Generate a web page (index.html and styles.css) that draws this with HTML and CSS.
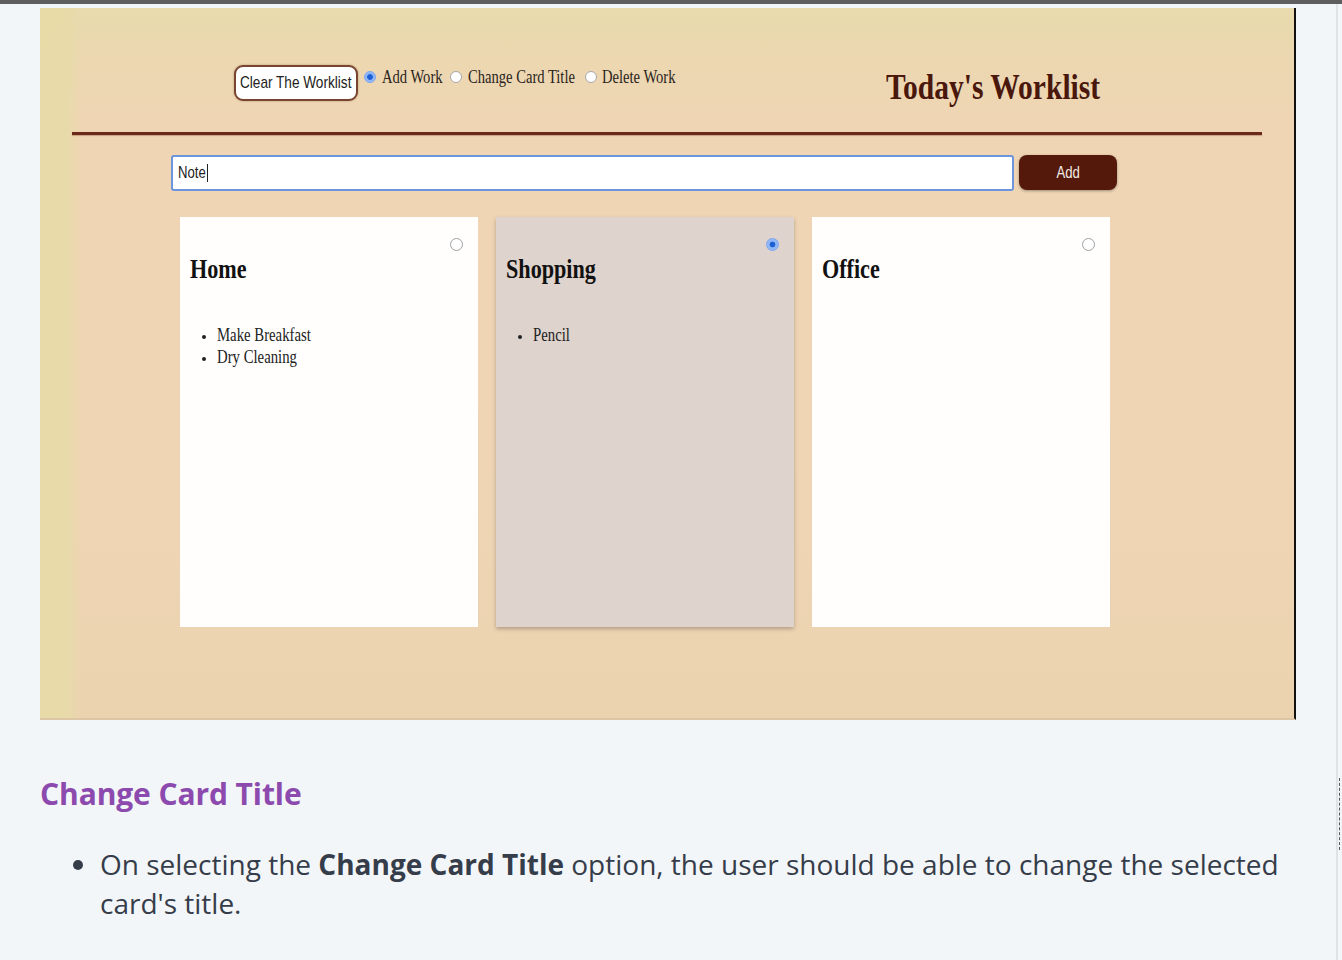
FILE: index.html
```html
<!DOCTYPE html>
<html lang="en">
<head>
<meta charset="utf-8">
<title>Change Card Title</title>
<link rel="stylesheet" href="styles.css">
</head>
<body>
<div class="topbar"></div>
<div class="page">
  <main class="content">
    <div class="shot">
      <div class="toolbar">
        <div class="controls">
          <button class="clear-btn"><span class="sq">Clear The Worklist</span></button>
          <label class="opt opt-add"><span class="radio checked"></span><span class="sq">Add Work</span></label>
          <label class="opt opt-change"><span class="radio"></span><span class="sq">Change Card Title</span></label>
          <label class="opt opt-delete"><span class="radio"></span><span class="sq">Delete Work</span></label>
        </div>
        <h1 class="app-title"><span class="sq-r">Today's Worklist</span></h1>
      </div>
      <div class="rule"></div>
      <div class="entry">
        <div class="note-input"><span class="sq note-text">Note</span><span class="caret"></span></div>
        <button class="add-btn"><span class="sq-c">Add</span></button>
      </div>
      <div class="cards">
        <section class="card">
          <span class="radio card-radio"></span>
          <h2 class="card-title"><span class="sq">Home</span></h2>
          <ul class="items">
            <li><span class="sq">Make Breakfast</span></li>
            <li><span class="sq">Dry Cleaning</span></li>
          </ul>
        </section>
        <section class="card selected">
          <span class="radio card-radio checked"></span>
          <h2 class="card-title"><span class="sq">Shopping</span></h2>
          <ul class="items">
            <li><span class="sq">Pencil</span></li>
          </ul>
        </section>
        <section class="card">
          <span class="radio card-radio"></span>
          <h2 class="card-title"><span class="sq">Office</span></h2>
        </section>
      </div>
    </div>
    <h3 class="section-title">Change Card Title</h3>
    <ul class="desc">
      <li>On selecting the <strong>Change Card Title</strong> option, the user should be able to change the selected card's title.</li>
    </ul>
  </main>
  <div class="scroll-track"><span class="dots"></span></div>
</div>
</body>
</html>
```

FILE: styles.css
```css
html, body {
  margin: 0;
  padding: 0;
}
body {
  background: #f3f6f8;
  font-family: "Open Sans", "Liberation Sans", sans-serif;
  color: #363d4a;
}
.topbar {
  height: 4px;
  background: #5d5e60;
}
.page {
  display: flex;
  height: 956px;
}
.content {
  width: 1296px;
  padding: 4px 0 0 40px;
  box-sizing: border-box;
}
.scroll-track {
  width: 2px;
  margin-left: 40px;
  background: #dde3e6;
  position: relative;
}
.dots {
  position: absolute;
  left: 3px;
  top: 774px;
  height: 72px;
  border-left: 1px dashed #555;
}

/* embedded screenshot */
.shot {
  width: 1256px;
  height: 712px;
  box-sizing: border-box;
  border-right: 2px solid #111;
  border-bottom: 2px solid #dcc6a6;
  background:
    linear-gradient(90deg, rgba(231,219,168,0.95) 0, rgba(231,219,168,0.9) 28px, rgba(231,219,168,0) 40px),
    linear-gradient(180deg, #e8dbad 0, #ebd8b0 40px, #efd5b4 110px, #efd5b4 400px, #ecd3b0 712px);
  font-family: "Liberation Serif", serif;
  color: #222;
}
.sq, .sq-r, .sq-c {
  display: inline-block;
  transform: scaleX(0.82);
  transform-origin: left center;
  white-space: nowrap;
}
.sq-r { transform-origin: right center; }
.sq-c { transform-origin: center center; }

.toolbar {
  height: 124px;
  box-sizing: border-box;
  padding: 57px 194px 0 194px;
  display: flex;
  align-items: flex-start;
}
.controls {
  display: flex;
  align-items: flex-start;
}
.clear-btn {
  width: 124px;
  height: 36px;
  box-sizing: border-box;
  border: 2px solid #7a4530;
  border-radius: 9px;
  background: #fff;
  font-family: "Liberation Sans", sans-serif;
  font-size: 16.6px;
  color: #222;
  padding: 0 0 0 4px;
  text-align: left;
  line-height: 32px;
  box-shadow: 0 0 2px rgba(90,40,20,0.4);
  overflow: hidden;
}
.opt {
  display: flex;
  align-items: center;
  font-size: 17.8px;
  color: #2a2420;
  height: 24px;
  margin-left: 6px;
}
.opt .radio { margin-right: 6px; }
.opt-add .sq { width: 63px; }
.opt-change { margin-left: 5px; }
.opt-change .sq { width: 111px; }
.opt-delete { margin-left: 6px; }
.opt-delete .radio { margin-right: 5px; }
.radio {
  width: 12px;
  height: 12px;
  box-sizing: border-box;
  border-radius: 50%;
  border: 1px solid #a8a8a8;
  background: #fff;
  flex: none;
  display: inline-block;
}
.radio.checked {
  border: 1px solid #7aa6ee;
  background: radial-gradient(circle, #1f5fd6 0, #1f5fd6 2.5px, #8cb4f4 3.2px, #9fc0f6 100%);
}
.app-title {
  margin: 4px 0 0 auto;
  font-size: 36px;
  line-height: 36px;
  font-weight: bold;
  color: #4a170c;
}
.rule {
  margin-left: 32px;
  width: 1190px;
  height: 3px;
  background: #6c2a1b;
  box-shadow: 0 1px 1px rgba(110,40,20,0.3);
}
.entry {
  display: flex;
  margin: 20px 0 0 131px;
  height: 36px;
}
.note-input {
  width: 843px;
  height: 36px;
  box-sizing: border-box;
  border: 2px solid #6d95db;
  border-radius: 3px;
  background: #fff;
  font-family: "Liberation Sans", sans-serif;
  font-size: 16px;
  color: #222;
  padding-left: 5px;
  display: flex;
  align-items: center;
}
.note-text { width: 29px; }
.caret {
  width: 1px;
  height: 18px;
  background: #222;
}
.add-btn {
  margin-left: 5px;
  width: 98px;
  height: 35px;
  border: none;
  border-radius: 8px;
  background: #55190b;
  color: #f4ece6;
  font-family: "Liberation Sans", sans-serif;
  font-size: 16px;
  box-shadow: 0 1px 3px rgba(0,0,0,0.35);
  padding: 0;
}
.cards {
  display: flex;
  gap: 18px;
  margin: 26px 0 0 140px;
}
.card {
  width: 298px;
  height: 410px;
  background: #fffefd;
  display: flex;
  flex-direction: column;
}
.card.selected {
  background: #dfd3cd;
  box-shadow: 0 2px 4px rgba(0,0,0,0.25);
}
.card-radio {
  align-self: flex-end;
  margin: 21px 15px 0 0;
  width: 13px;
  height: 13px;
  border: 1.5px solid #a0a0a0;
}
.card-radio.checked {
  border: 1px solid #7aa6ee;
}
.card-title {
  margin: 2px 0 0 10px;
  font-size: 27px;
  line-height: 32px;
  font-weight: bold;
  color: #111;
}
.items {
  margin: 39px 0 0 0;
  padding-left: 37px;
  font-size: 18px;
  line-height: 22px;
  color: #222;
}
.items li::marker { font-size: 14px; }

/* description below */
.section-title {
  margin: 54px 0 0 0;
  font-size: 30px;
  line-height: 40px;
  font-weight: 700;
  color: #8c4aae;
  letter-spacing: -0.1px;
}
.desc {
  margin: 31px 0 0 0;
  padding-left: 60px;
  font-size: 28px;
  line-height: 39px;
  color: #363d4a;
  width: 1240px;
  letter-spacing: 0;
}
.desc strong {
  font-weight: 700;
  color: #363d4a;
}
```
